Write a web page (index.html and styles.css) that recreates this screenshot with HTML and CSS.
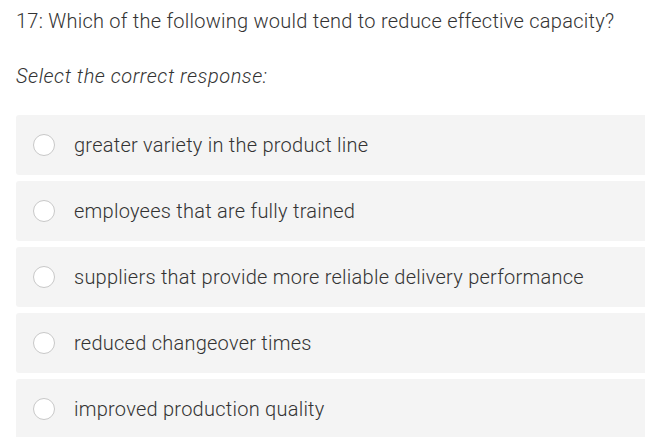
FILE: index.html
```html
<!DOCTYPE html>
<html>
<head>
<meta charset="utf-8">
<link rel="stylesheet" href="styles.css">
</head>
<body>
<div class="question">
  <p class="prompt">17: Which of the following would tend to reduce effective capacity?</p>
  <p class="instruction">Select the correct response:</p>
  <div class="options">
    <label class="option"><span class="radio"></span><span class="label">greater variety in the product line</span></label>
    <label class="option"><span class="radio"></span><span class="label">employees that are fully trained</span></label>
    <label class="option"><span class="radio"></span><span class="label">suppliers that provide more reliable delivery performance</span></label>
    <label class="option"><span class="radio"></span><span class="label">reduced changeover times</span></label>
    <label class="option"><span class="radio"></span><span class="label">improved production quality</span></label>
  </div>
</div>
</body>
</html>
```
FILE: styles.css
```css
html, body {
  margin: 0;
  padding: 0;
  background: #ffffff;
}
body {
  font-family: Roboto, "Liberation Sans", sans-serif;
  font-weight: 300;
  color: #333333;
  font-size: 20px;
  line-height: 24px;
  overflow: hidden;
}
.question {
  padding: 9px 0 0 16px;
}
.prompt {
  margin: 0;
  letter-spacing: 0.25px;
}
.instruction {
  margin: 31px 0 0 0;
  font-style: italic;
  letter-spacing: 0.55px;
}
.options {
  margin-top: 27px;
  display: flex;
  flex-direction: column;
  gap: 6px;
  margin-right: -10px;
}
.option {
  display: flex;
  align-items: center;
  height: 60px;
  background: #f4f4f4;
  border-radius: 3px;
  padding-left: 17px;
  box-sizing: border-box;
}
.radio {
  width: 22px;
  height: 22px;
  box-sizing: border-box;
  border: 1px solid #c8c8c8;
  border-radius: 50%;
  background: #ffffff;
  flex: none;
}
.label {
  margin-left: 19px;
  letter-spacing: 0.25px;
}
```
